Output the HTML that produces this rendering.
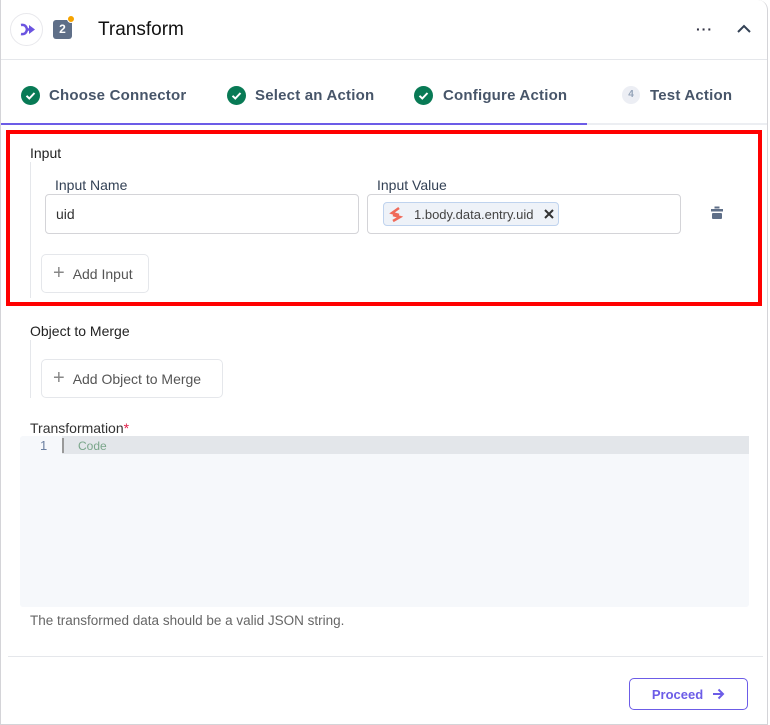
<!DOCTYPE html>
<html><head><meta charset="utf-8"><style>
*{box-sizing:border-box;margin:0;padding:0}
body{width:770px;height:725px;background:#fff;font-family:"Liberation Sans",sans-serif;position:relative;overflow:hidden;color:#222}
.a{position:absolute}
.card{left:0;top:0;width:768px;height:725px;border:1px solid #d4d4d8;border-top:none;border-radius:0 10px 0 0}
.t{font-size:15px;color:#475569;font-weight:bold;white-space:nowrap;letter-spacing:0.2px}
.lbl{font-size:14px;color:#334155}
.inp{border:1px solid #d4d4d8;border-radius:4px;height:40px;background:#fff}
.btn{border:1px solid #e5e7eb;border-radius:5px;height:39px;font-size:14px;color:#555;display:flex;align-items:center;padding-left:11px}
</style></head><body>
<div class="a card"></div>
<div class="a" style="left:10px;top:13px;width:33px;height:33px;border-radius:50%;border:1px solid #e8e8ec;background:#fff"></div>
<svg class="a" style="left:10px;top:13px" width="33" height="33" viewBox="0 0 33 33"><path d="M11 12 Q16 11 17 16.5 Q16 22 11 21" fill="none" stroke="#6b54e0" stroke-width="2.5"/><path d="M16 16.5 H20" stroke="#6b54e0" stroke-width="2.5"/><path d="M19 12 L25 16.5 L19 21Z" fill="#6b54e0"/></svg>
<div class="a" style="left:53px;top:20px;width:19px;height:19px;border-radius:3px;background:#5f6f88;color:#fff;font-size:12px;font-weight:bold;text-align:center;line-height:19px">2</div>
<div class="a" style="left:67px;top:15px;width:8px;height:8px;border-radius:50%;background:#f5a300;border:1px solid #fff"></div>
<div class="a" style="left:98px;top:19px;font-size:19px;color:#111">Transform</div>
<div class="a" style="left:696px;top:21px;font-size:14px;color:#334;font-weight:bold;letter-spacing:1px">···</div>
<svg class="a" style="left:737px;top:24px" width="14" height="10"><path d="M1 8 L7 2 L13 8" fill="none" stroke="#334155" stroke-width="2"/></svg>
<div class="a" style="left:1px;top:59px;width:766px;height:1px;background:#e5e7eb"></div>
<svg class="a" style="left:21px;top:86px" width="19" height="19"><circle cx="9.5" cy="9.5" r="9.5" fill="#087a55"/><path d="M5.5 9.8 L8.3 12.5 L13.5 7" fill="none" stroke="#fff" stroke-width="2"/></svg>
<div class="a t" style="left:49px;top:87px">Choose Connector</div>
<svg class="a" style="left:227px;top:86px" width="19" height="19"><circle cx="9.5" cy="9.5" r="9.5" fill="#087a55"/><path d="M5.5 9.8 L8.3 12.5 L13.5 7" fill="none" stroke="#fff" stroke-width="2"/></svg>
<div class="a t" style="left:255px;top:87px">Select an Action</div>
<svg class="a" style="left:414px;top:86px" width="19" height="19"><circle cx="9.5" cy="9.5" r="9.5" fill="#087a55"/><path d="M5.5 9.8 L8.3 12.5 L13.5 7" fill="none" stroke="#fff" stroke-width="2"/></svg>
<div class="a t" style="left:443px;top:87px">Configure Action</div>
<div class="a" style="left:622px;top:86px;width:18px;height:18px;border-radius:50%;background:#eceef4;color:#94a3b8;font-size:10px;font-weight:bold;text-align:center;line-height:18px">4</div>
<div class="a t" style="left:650px;top:87px">Test Action</div>
<div class="a" style="left:1px;top:123px;width:766px;height:2px;background:#eceef2"></div>
<div class="a" style="left:1px;top:123px;width:586px;height:2px;background:#6c5ce7"></div>
<div class="a" style="left:6px;top:130px;width:756px;height:176px;border:4px solid #f00"></div>
<div class="a" style="left:30px;top:145px;font-size:14px;color:#222">Input</div>
<div class="a" style="left:30px;top:162px;width:1px;height:136px;background:#e5e7eb"></div>
<div class="a lbl" style="left:55px;top:177px">Input Name</div>
<div class="a lbl" style="left:377px;top:177px">Input Value</div>
<div class="a inp" style="left:45px;top:194px;width:314px"></div>
<div class="a" style="left:56px;top:206px;font-size:14px;color:#333">uid</div>
<div class="a inp" style="left:367px;top:194px;width:314px"></div>
<div class="a" style="left:383px;top:202px;width:176px;height:24px;border:1px solid #bfd3ee;border-radius:4px;background:#eef2f8"></div>
<svg class="a" style="left:387px;top:205px" width="18" height="18"><path d="M12 3 L5 8 L12 10" fill="none" stroke="#ef6a5a" stroke-width="2.5"/><path d="M6 10 L13 12 L6 16" fill="none" stroke="#ef6a5a" stroke-width="2.5"/></svg>
<div class="a" style="left:414px;top:207px;font-size:13px;color:#444">1.body.data.entry.uid</div>
<svg class="a" style="left:544px;top:209px" width="10" height="10"><path d="M1 1 L9 9 M9 1 L1 9" stroke="#333" stroke-width="2"/></svg>
<svg class="a" style="left:711px;top:206px" width="12" height="14"><rect x="3.5" y="0.5" width="5" height="2" fill="#5f6f88"/><rect x="0" y="3" width="12" height="2.5" fill="#5f6f88"/><rect x="1" y="7" width="10" height="6" rx="1" fill="#5f6f88"/></svg>
<div class="a btn" style="left:41px;top:254px;width:108px"><span style="font-size:20px;color:#888;margin-right:8px;font-weight:300">+</span>Add Input</div>
<div class="a" style="left:30px;top:323px;font-size:14px;color:#222">Object to Merge</div>
<div class="a" style="left:30px;top:340px;width:1px;height:58px;background:#e5e7eb"></div>
<div class="a btn" style="left:41px;top:359px;width:182px"><span style="font-size:20px;color:#888;margin-right:8px;font-weight:300">+</span>Add Object to Merge</div>
<div class="a" style="left:30px;top:420px;font-size:14px;color:#333">Transformation<span style="color:#e11d48">*</span></div>
<div class="a" style="left:20px;top:436px;width:729px;height:171px;background:#f6f8fb;border-radius:3px"></div>
<div class="a" style="left:62px;top:436px;width:687px;height:18px;background:#e3e6ea"></div>
<div class="a" style="left:62px;top:438px;width:2px;height:15px;background:#999"></div>
<div class="a" style="left:40px;top:438px;font-size:13px;color:#6b7fa0">1</div>
<div class="a" style="left:78px;top:439px;font-size:12px;color:#7aa68a">Code</div>
<div class="a" style="left:30px;top:613px;font-size:13.5px;color:#666">The transformed data should be a valid JSON string.</div>
<div class="a" style="left:8px;top:656px;width:755px;height:1px;background:#e5e7eb"></div>
<div class="a" style="left:629px;top:678px;width:119px;height:32px;border:1px solid #6c5ce7;border-radius:5px;color:#6c5ce7;font-size:13px;font-weight:bold;display:flex;align-items:center;justify-content:center">Proceed<svg style="margin-left:9px" width="13" height="12"><path d="M1 6 H11 M6.5 1.5 L11 6 L6.5 10.5" fill="none" stroke="#6c5ce7" stroke-width="2"/></svg></div>
</body></html>
